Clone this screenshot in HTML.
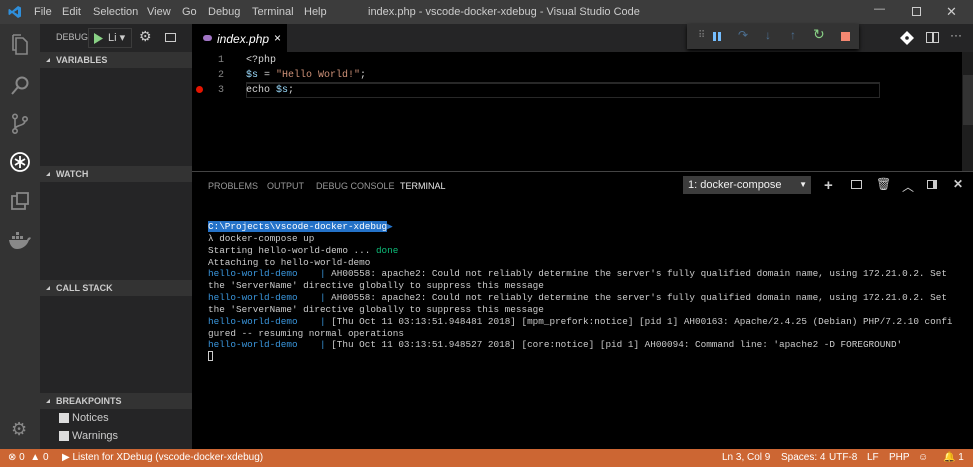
<!DOCTYPE html>
<html><head><meta charset="utf-8"><style>
*{margin:0;padding:0;box-sizing:border-box}
body{width:973px;height:467px;overflow:hidden;background:#000;font-family:"Liberation Sans",sans-serif;position:relative;color:#ccc}
.abs{position:absolute}
.title{left:0;top:0;width:973px;height:24px;background:#3c3c3c;font-size:11px;color:#ccc}
.title span{position:absolute;top:6px}
.act{left:0;top:24px;width:40px;height:425px;background:#333}
.side{left:40px;top:24px;width:152px;height:425px;background:#252526}
.sh{position:absolute;left:0;width:152px;height:16px;font-size:9px;font-weight:bold;color:#ccc;padding-left:16px;line-height:16px}
.sh:before{content:"";position:absolute;left:6px;top:6px;border-left:4px solid transparent;border-bottom:4px solid #ccc}
.tabs{left:192px;top:24px;width:781px;height:28px;background:#252526}
.code{font-family:"Liberation Mono",monospace;font-size:10px;position:absolute;white-space:pre}
.term{left:208px;top:221px;font-family:"Liberation Mono",monospace;font-size:9.33px;line-height:11.85px;white-space:pre;color:#ccc}
.b{color:#3a96dd}
.status{left:0;top:449px;width:973px;height:18px;background:#cc6633;color:#fff;font-size:10px}
.status span{position:absolute;top:3px}
.ph{position:absolute;top:181px;font-size:9px;color:#999}
</style></head><body>
<div class="abs title">
<svg class="abs" style="left:8px;top:5px" width="14" height="14" viewBox="0 0 14 14"><path d="M10 1 L13 2.5 V11.5 L10 13 L4 8 L1.5 10 L0.5 9.5 V4.5 L1.5 4 L4 6 Z" fill="#2f8fdb"/><path d="M10 4.5 L6 7 L10 9.5Z" fill="#3c3c3c"/></svg>
<span style="left:34px">File</span><span style="left:62px">Edit</span><span style="left:93px">Selection</span><span style="left:147px">View</span><span style="left:182px">Go</span><span style="left:208px">Debug</span><span style="left:252px">Terminal</span><span style="left:304px">Help</span>
<span style="left:368px">index.php - vscode-docker-xdebug - Visual Studio Code</span>
<span style="left:874px;top:3px">—</span><span style="left:912px;width:9px;height:9px;border:1px solid #ccc;top:7px"></span><span style="left:946px;top:4px;font-size:13px">✕</span>
</div>
<div class="abs act">
<svg class="abs" style="left:10px;top:10px" width="20" height="22" viewBox="0 0 20 22" fill="none" stroke="#888" stroke-width="1.6"><path d="M6 4h7l4 4v12H6z M3 1h8M3 1v15h3"/></svg>
<svg class="abs" style="left:10px;top:51px" width="20" height="22" viewBox="0 0 20 22" fill="none" stroke="#888" stroke-width="2"><circle cx="12" cy="8" r="5.5"/><path d="M8 12L2 19"/></svg>
<svg class="abs" style="left:11px;top:89px" width="18" height="22" viewBox="0 0 18 22" fill="none" stroke="#888" stroke-width="1.6"><circle cx="4" cy="3.5" r="2.2"/><circle cx="4" cy="18" r="2.2"/><circle cx="14" cy="6" r="2.2"/><path d="M4 6v10M14 8c0 5-10 4-10 8"/></svg>
<svg class="abs" style="left:9px;top:127px" width="22" height="22" viewBox="0 0 22 22" fill="none" stroke="#fff" stroke-width="1.8"><circle cx="11" cy="11" r="9"/><path d="M11 5v12M6 8l10 6M16 8l-10 6"/></svg>
<svg class="abs" style="left:10px;top:167px" width="20" height="20" viewBox="0 0 20 20" fill="none" stroke="#888" stroke-width="1.8"><path d="M2 5h5V2h11v11h-3v5H2z M7 5v8h8"/></svg>
<svg class="abs" style="left:8px;top:208px" width="24" height="18" viewBox="0 0 24 18" fill="#888"><path d="M1 8h18c1-3 3-3 4-2-1 1-1 2-2 2-2 6-7 9-12 9C5 17 2 14 1 8z"/><rect x="4" y="4" width="3" height="3"/><rect x="8" y="4" width="3" height="3"/><rect x="12" y="4" width="3" height="3"/><rect x="8" y="0" width="3" height="3"/></svg>
<div class="abs" style="left:11px;top:395px;font-size:18px;color:#888">⚙</div>
</div>
<div class="abs side">
<div class="abs" style="left:16px;top:8px;font-size:9px;color:#bbb">DEBUG</div>
<div class="abs" style="left:48px;top:4px;width:44px;height:20px;border:1px solid #3c3c3c;background:#252526"></div>
<svg class="abs" style="left:53px;top:9px" width="10" height="11"><path d="M1 0L10 5.5L1 11Z" fill="#89d185"/></svg>
<div class="abs" style="left:68px;top:7px;font-size:11px;color:#ccc">Li ▾</div>
<div class="abs" style="left:99px;top:4px;font-size:14px;color:#ccc">⚙</div>
<div class="abs" style="left:125px;top:9px;width:11px;height:9px;border:1px solid #ccc"></div>
<div class="sh" style="top:28px;background:#333">VARIABLES</div>
<div class="sh" style="top:142px;background:#333">WATCH</div>
<div class="sh" style="top:256px;background:#333">CALL STACK</div>
<div class="sh" style="top:369px;background:#333">BREAKPOINTS</div>
<div class="abs" style="left:19px;top:389px;width:10px;height:10px;background:#ddd"></div>
<div class="abs" style="left:32px;top:388px;font-size:11px">Notices</div>
<div class="abs" style="left:19px;top:407px;width:10px;height:10px;background:#ddd"></div>
<div class="abs" style="left:32px;top:406px;font-size:11px">Warnings</div>
</div>
<div class="abs tabs">
<div class="abs" style="left:0;top:0;width:95px;height:28px;background:#000"></div>
<div class="abs" style="left:11px;top:11px;width:9px;height:6px;border-radius:3px;background:#a074c4"></div>
<div class="abs" style="left:25px;top:8px;font-size:12px;font-style:italic;color:#fff">index.php</div>
<div class="abs" style="left:82px;top:7px;font-size:12px;color:#fff">×</div>
<div class="abs" style="left:495px;top:0;width:172px;height:25px;background:#333;box-shadow:0 2px 4px #000"></div>
<div class="abs" style="left:506px;top:6px;font-size:10px;color:#777">⠿</div>
<div class="abs" style="left:521px;top:8px;width:3px;height:9px;background:#75beff"></div><div class="abs" style="left:526px;top:8px;width:3px;height:9px;background:#75beff"></div>
<div class="abs" style="left:546px;top:4px;font-size:12px;color:#4c6f91">↷</div>
<div class="abs" style="left:573px;top:4px;font-size:12px;color:#4c6f91">↓</div>
<div class="abs" style="left:598px;top:4px;font-size:12px;color:#4c6f91">↑</div>
<div class="abs" style="left:621px;top:2px;font-size:14px;color:#89d185">↻</div>
<div class="abs" style="left:649px;top:8px;width:9px;height:9px;background:#f48771"></div>
<svg class="abs" style="left:708px;top:7px" width="14" height="14"><path d="M7 0L14 7L7 14L0 7Z" fill="#fff"/><circle cx="7" cy="7" r="1.8" fill="#252526"/></svg>
<div class="abs" style="left:734px;top:8px;width:13px;height:11px;border:1.5px solid #ccc"></div><div class="abs" style="left:740px;top:8px;width:1.5px;height:11px;background:#ccc"></div>
<div class="abs" style="left:758px;top:4px;font-size:12px;color:#ccc">···</div>
</div>
<div class="code" style="left:218px;top:53px;line-height:15px;color:#858585">1
2
3</div>
<div class="abs" style="left:196px;top:86px;width:7px;height:7px;border-radius:50%;background:#e51400"></div>
<div class="abs" style="left:246px;top:83px;width:634px;height:15px;border:1px solid #282828"></div>
<div class="abs" style="left:246px;top:82px;width:634px;height:1px;background:#282828"></div>
<div class="code" style="left:246px;top:53px;line-height:15px;color:#d4d4d4">&lt;?php
<span style="color:#9cdcfe">$s</span> = <span style="color:#ce9178">"Hello World!"</span>;
echo <span style="color:#9cdcfe">$s</span>;</div>
<div class="abs" style="left:962px;top:52px;width:11px;height:119px;background:#1e1e1e"></div>
<div class="abs" style="left:963px;top:75px;width:10px;height:50px;background:#333"></div>
<div class="abs" style="left:192px;top:171px;width:781px;height:1px;background:#444"></div>
<div class="ph" style="left:208px">PROBLEMS</div>
<div class="ph" style="left:267px">OUTPUT</div>
<div class="ph" style="left:316px">DEBUG CONSOLE</div>
<div class="ph" style="left:400px;color:#e7e7e7">TERMINAL</div>
<div class="abs" style="left:683px;top:176px;width:128px;height:18px;background:#3c3c3c;font-size:11px;color:#f0f0f0;padding:3px 5px">1: docker-compose<span style="position:absolute;right:4px;font-size:8px;top:4px">▼</span></div>
<div class="abs" style="left:824px;top:177px;font-size:15px;font-weight:bold;color:#ccc">+</div>
<div class="abs" style="left:851px;top:180px;width:11px;height:9px;border:1.5px solid #ccc"></div>
<div class="abs" style="left:876px;top:177px;font-size:12px;color:#ccc">🗑</div>
<div class="abs" style="left:902px;top:178px;font-size:12px;color:#ccc">︿</div>
<div class="abs" style="left:927px;top:180px;width:10px;height:9px;border:1.5px solid #ccc;border-right-width:4px"></div>
<div class="abs" style="left:953px;top:177px;font-size:12px;font-weight:bold;color:#ccc">✕</div>
<div class="abs term"><span style="background:#2472c8;color:#fff">C:\Projects\vscode-docker-xdebug</span><span style="color:#2472c8">▶</span>
λ docker-compose up
Starting hello-world-demo ... <span style="color:#0dbc79">done</span>
Attaching to hello-world-demo
<span class="b">hello-world-demo    |</span> AH00558: apache2: Could not reliably determine the server's fully qualified domain name, using 172.21.0.2. Set
the 'ServerName' directive globally to suppress this message
<span class="b">hello-world-demo    |</span> AH00558: apache2: Could not reliably determine the server's fully qualified domain name, using 172.21.0.2. Set
the 'ServerName' directive globally to suppress this message
<span class="b">hello-world-demo    |</span> [Thu Oct 11 03:13:51.948481 2018] [mpm_prefork:notice] [pid 1] AH00163: Apache/2.4.25 (Debian) PHP/7.2.10 confi
gured -- resuming normal operations
<span class="b">hello-world-demo    |</span> [Thu Oct 11 03:13:51.948527 2018] [core:notice] [pid 1] AH00094: Command line: 'apache2 -D FOREGROUND'
<span style="display:inline-block;width:5px;height:10px;border:1px solid #ccc"></span></div>
<div class="abs status">
<span style="left:8px">⊗ 0 &nbsp;▲ 0</span>
<span style="left:62px">▶ Listen for XDebug (vscode-docker-xdebug)</span>
<span style="left:722px">Ln 3, Col 9</span><span style="left:781px">Spaces: 4</span><span style="left:829px">UTF-8</span><span style="left:867px">LF</span><span style="left:889px">PHP</span><span style="left:918px">☺</span><span style="left:943px">🔔 1</span>
</div>
</body></html>
